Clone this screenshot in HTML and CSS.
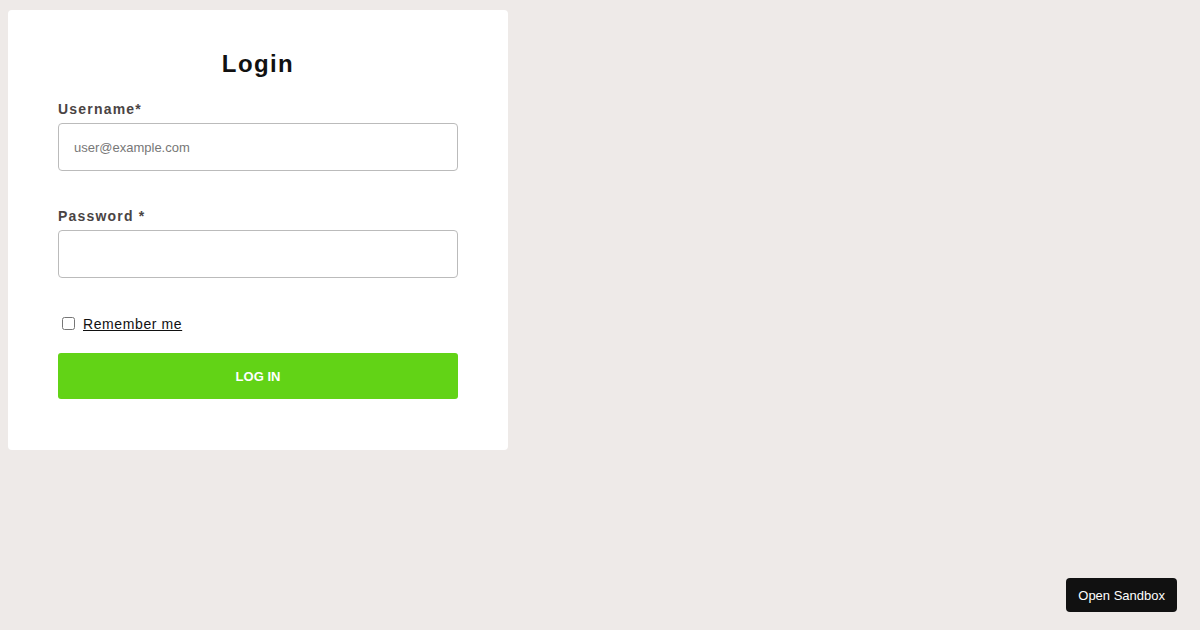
FILE: index.html
```html
<!DOCTYPE html>
<html lang="en">
<head>
    <meta charset="UTF-8">
    <meta name="viewport" content="width=device-width, initial-scale=1.0">
    <title>Login</title>
    <link rel="stylesheet" href="styles.css">
</head>
<body>
    <div class="login-card">
        <h1 class="login-title">Login</h1>
        <form class="login-form">
            <div class="field">
                <label for="username">Username*</label>
                <input type="text" id="username" placeholder="user@example.com">
            </div>
            <div class="field">
                <label for="password">Password *</label>
                <input type="password" id="password">
            </div>
            <div class="remember">
                <input type="checkbox" id="remember">
                <label for="remember">Remember&nbsp;me</label>
            </div>
            <button type="submit" class="login-button">LOG IN</button>
        </form>
    </div>
    <button class="sandbox-button">Open Sandbox</button>
</body>
</html>
```

FILE: styles.css
```css
body {
    font-family: "Liberation Sans", Arial, sans-serif;
    margin: 0;
    padding: 10px 8px;
    background-color: #eeeae8;
}
.login-card {
    width: 500px;
    box-sizing: border-box;
    background-color: #fff;
    border-radius: 4px;
    padding: 40px 50px 51px;
}
.login-title {
    margin: 0 0 23px;
    text-align: center;
    font-size: 24px;
    line-height: 28px;
    letter-spacing: 1.4px;
    color: #111;
}
.field {
    margin-bottom: 37px;
}
.field label {
    display: block;
    font-size: 14px;
    font-weight: bold;
    letter-spacing: 1.2px;
    color: #4a4444;
    margin-bottom: 6px;
}
.field input {
    display: block;
    width: 100%;
    height: 48px;
    box-sizing: border-box;
    border: 1px solid #bbb;
    border-radius: 4px;
    padding: 0 15px;
    font-family: "Liberation Sans", Arial, sans-serif;
    font-size: 13px;
    color: #333;
}
.field input::placeholder {
    color: #777;
}
.remember {
    display: flex;
    align-items: center;
    margin: 0 0 21px 4px;
    padding-top: 1px;
    font-size: 14px;
}
.remember input {
    width: 13px;
    height: 13px;
    margin: 0 8px 2px 0;
}
.remember label {
    text-decoration: underline;
    letter-spacing: 0.6px;
    color: #111;
}
.login-button {
    display: block;
    width: 100%;
    height: 46px;
    border: none;
    border-radius: 3px;
    background-color: #62d316;
    color: #fff;
    font-family: "Liberation Sans", Arial, sans-serif;
    font-size: 13px;
    font-weight: bold;
    cursor: pointer;
}
.sandbox-button {
    position: fixed;
    right: 23px;
    bottom: 18px;
    height: 34px;
    padding: 0 12px;
    border: none;
    border-radius: 4px;
    background-color: #111;
    color: #fff;
    font-family: "Liberation Sans", Arial, sans-serif;
    font-size: 13px;
}
```
